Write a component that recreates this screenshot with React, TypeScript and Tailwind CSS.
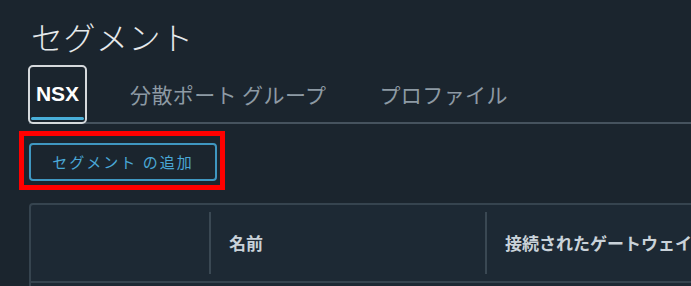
const jp = "font-['Noto_Sans_CJK_JP','Noto_Sans',sans-serif]";

export default function App() {
  return (
    <div className={`w-[691px] h-[286px] overflow-hidden bg-[#1b252e] pl-[29px] ${jp}`}>
      {/* Title */}
      <h1 className="ml-[2px] pt-[14px] h-[58px] text-[32px] leading-[44px] font-light tracking-[0.5px] text-[#e6e9eb]">
        セグメント
      </h1>

      {/* Tabs */}
      <div className="mt-[7px] h-[59px] w-[700px] flex items-start border-b-2 border-[#46535e] box-border">
        <button className="-ml-px w-[59px] h-[59px] shrink-0 flex flex-col items-center rounded-[5px] border-2 border-[#d5d9dc] bg-[#1b252e]">
          <span className="mt-[13px] h-[28px] leading-[28px] text-[21px] font-bold text-white font-['Liberation_Sans',sans-serif]">
            NSX
          </span>
          <span className="mt-auto mb-[2px] w-[53px] h-[3px] rounded-sm bg-[#49afd9]" />
        </button>
        <span className="ml-[43px] h-[59px] flex items-center text-[21px] tracking-[0.4px] text-[#8d9aa4]">
          分散ポート グループ
        </span>
        <span className="ml-[53px] h-[59px] flex items-center text-[21px] tracking-[0.4px] text-[#8d9aa4]">
          プロファイル
        </span>
      </div>

      {/* Add button with highlight */}
      <div className="-ml-[10px] mt-[7px] w-fit border-[5px] border-[#ff0000] pt-[7px] pb-[4px] pl-[5px] pr-[3px]">
        <button className="w-[188px] h-[38px] rounded-[4px] border-2 border-[#3f97c1] text-[15px] tracking-[2px] text-[#4aa8d6] flex items-center justify-center">
          セグメント の追加
        </button>
      </div>

      {/* Table */}
      <div className="mt-[13px] w-[800px] rounded-[4px] border-2 border-[#36444f] bg-[#1d2934]">
        <div className="h-[78px] flex items-center border-b-2 border-[#36444f] text-[17px] font-bold text-[#c9d2d9]">
          <div className="w-[180px] h-full flex items-center justify-end">
            <span className="w-[2px] h-[62px] bg-[#3a4853]" />
          </div>
          <div className="w-[276px] h-full flex items-center">
            <span className="ml-[18px]">名前</span>
            <span className="ml-auto w-[2px] h-[62px] bg-[#3a4853]" />
          </div>
          <div className="flex-1 h-full flex items-center">
            <span className="ml-[18px]">接続されたゲートウェイ</span>
          </div>
        </div>
        <div className="h-[40px]" />
      </div>
    </div>
  );
}
